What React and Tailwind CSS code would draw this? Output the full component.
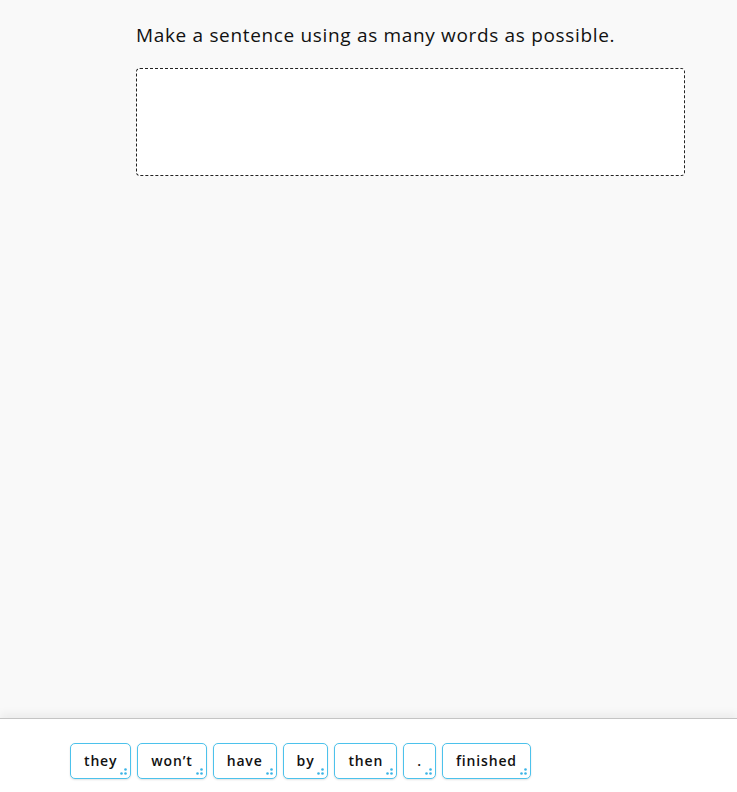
const words = ["they", "won’t", "have", "by", "then", ".", "finished"];

const Grip = () => (
    <svg className="absolute bottom-[3px] right-[3px]" width="7" height="7" viewBox="0 0 7 7">
        <circle cx="5.5" cy="1.5" r="1.3" fill="#3bb4e6" />
        <circle cx="1.5" cy="5.5" r="1.3" fill="#3bb4e6" />
        <circle cx="5.5" cy="5.5" r="1.3" fill="#3bb4e6" />
    </svg>
);

const Tile = ({ word }) => (
    <div className="relative flex h-[36px] items-center rounded-[5px] border border-[#4cc2ec] bg-white px-[13px] pb-[1px] text-[14px] font-semibold tracking-[0.06em] text-[#111] shadow-[0_1px_2px_rgba(0,0,0,0.12)]">
        {word}
        <Grip />
    </div>
);

export default function App() {
    return (
        <div className="flex h-[792px] w-[737px] flex-col bg-[#f9f9f9]" style={{ fontFamily: '"Open Sans", sans-serif' }}>
            <div className="flex-1 pl-[136px] pr-[52px] pt-[22px]">
                <h1 className="text-[19px] leading-[26px] tracking-[0.035em] text-[#111]">
                    Make a sentence using as many words as possible.
                </h1>
                <div className="mt-[20px] h-[108px] rounded-[4px] border border-dashed border-[#222] bg-white"></div>
            </div>
            <div className="relative h-[74px] border-t border-[#c4c4c4] bg-white shadow-[0_-5px_8px_rgba(0,0,0,0.05)]">
                <div className="flex gap-[6px] pl-[70px] pt-[24px]">
                    {words.map((w) => (
                        <Tile key={w} word={w} />
                    ))}
                </div>
            </div>
        </div>
    );
}
